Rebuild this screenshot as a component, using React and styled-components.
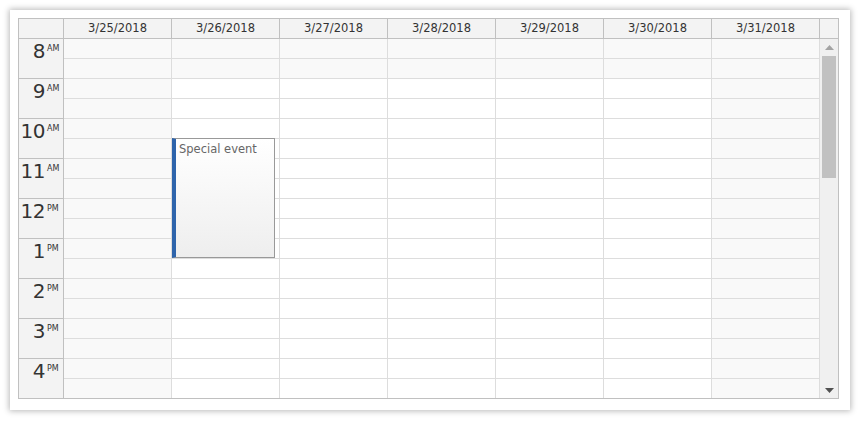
import styled, { createGlobalStyle } from "styled-components";

const GlobalStyle = createGlobalStyle`
  html, body {
    margin: 0;
    padding: 0;
    background: #ffffff;
  }
  body {
    font-family: "DejaVu Sans", Tahoma, sans-serif;
  }
  * {
    box-sizing: border-box;
  }
`;

const days = ["3/25/2018", "3/26/2018", "3/27/2018", "3/28/2018", "3/29/2018", "3/30/2018", "3/31/2018"];
const hours = [
  ["8", "AM"], ["9", "AM"], ["10", "AM"], ["11", "AM"], ["12", "PM"],
  ["1", "PM"], ["2", "PM"], ["3", "PM"], ["4", "PM"],
];
const weekend = [true, false, false, false, false, false, true];

const Frame = styled.div`
  margin: 10px;
  width: 840px;
  height: 400px;
  padding: 8px;
  background: #ffffff;
  box-shadow: 0 0 6px 1px rgba(0, 0, 0, 0.28);
`;

const Calendar = styled.div`
  width: 821px;
  height: 381px;
  border: 1px solid #c0c0c0;
  display: flex;
  flex-direction: column;
  overflow: hidden;
`;

const HeaderRow = styled.div`
  display: grid;
  grid-template-columns: 45px repeat(7, 108px) 18px;
  border-bottom: 1px solid #c0c0c0;
  height: 20px;
  flex: none;
`;

const HeaderCell = styled.div`
  background: #f3f3f3;
  color: #333;
  font-size: 11.5px;
  line-height: 19px;
  text-align: center;
  border-right: ${(p) => (p.$last ? "none" : "1px solid #c0c0c0")};
`;

const Body = styled.div`
  display: grid;
  grid-template-columns: 45px repeat(7, 108px) 18px;
  flex: 1;
  overflow: hidden;
`;

const HourColumn = styled.div`
  display: flex;
  flex-direction: column;
  border-right: 1px solid #c0c0c0;
`;

const HourCell = styled.div`
  height: 40px;
  flex: none;
  background: #f3f3f3;
  color: #333;
  border-bottom: 1px solid #c0c0c0;
  display: flex;
  justify-content: flex-end;
  align-items: flex-start;
  padding-right: 2px;
`;

const HourNum = styled.span`
  font-size: 20px;
  line-height: 25px;
  letter-spacing: -0.5px;
`;

const HourSuffix = styled.span`
  font-size: 8px;
  line-height: 10px;
  margin-top: 5px;
  margin-left: 2px;
  width: 14px;
`;

const DayColumn = styled.div`
  position: relative;
  display: flex;
  flex-direction: column;
  border-right: 1px solid #dddddd;
`;

const Slot = styled.div`
  height: 20px;
  flex: none;
  border-bottom: 1px solid #dddddd;
  background: ${(p) => (p.$off ? "#f9f9f9" : "#ffffff")};
`;

const Event = styled.div`
  position: absolute;
  left: 0;
  top: 99px;
  width: 103px;
  height: 120px;
  border: 1px solid #999999;
  border-left: 4px solid #2e64ab;
  background: linear-gradient(to bottom, #ffffff, #eeeeee);
  color: #666666;
  font-size: 11.5px;
  padding: 3px 3px;
`;

const Scrollbar = styled.div`
  background: #f0f0f0;
  display: flex;
  flex-direction: column;
  align-items: center;
`;

const Arrow = styled.div`
  height: 17px;
  width: 100%;
  display: flex;
  align-items: center;
  justify-content: center;
  flex: none;
`;

const Thumb = styled.div`
  width: 14px;
  height: 122px;
  background: #c1c1c1;
  flex: none;
`;

const Spacer = styled.div`
  flex: 1;
`;

function Triangle({ up, color }) {
  return (
    <svg width="9" height="5" viewBox="0 0 9 5">
      <polygon points={up ? "0,5 9,5 4.5,0" : "0,0 9,0 4.5,5"} fill={color} />
    </svg>
  );
}

export default function App() {
  return (
    <>
      <GlobalStyle />
      <Frame>
        <Calendar>
          <HeaderRow>
            <HeaderCell />
            {days.map((d) => (
              <HeaderCell key={d}>{d}</HeaderCell>
            ))}
            <HeaderCell $last />
          </HeaderRow>
          <Body>
            <HourColumn>
              {hours.map(([n, s]) => (
                <HourCell key={n + s}>
                  <HourNum>{n}</HourNum>
                  <HourSuffix>{s}</HourSuffix>
                </HourCell>
              ))}
            </HourColumn>
            {days.map((d, i) => (
              <DayColumn key={d}>
                {Array.from({ length: 18 }).map((_, k) => (
                  <Slot key={k} $off={weekend[i] || k < 2} />
                ))}
                {i === 1 && <Event>Special event</Event>}
              </DayColumn>
            ))}
            <Scrollbar>
              <Arrow>
                <Triangle up color="#a3a3a3" />
              </Arrow>
              <Thumb />
              <Spacer />
              <Arrow>
                <Triangle color="#505050" />
              </Arrow>
            </Scrollbar>
          </Body>
        </Calendar>
      </Frame>
    </>
  );
}
